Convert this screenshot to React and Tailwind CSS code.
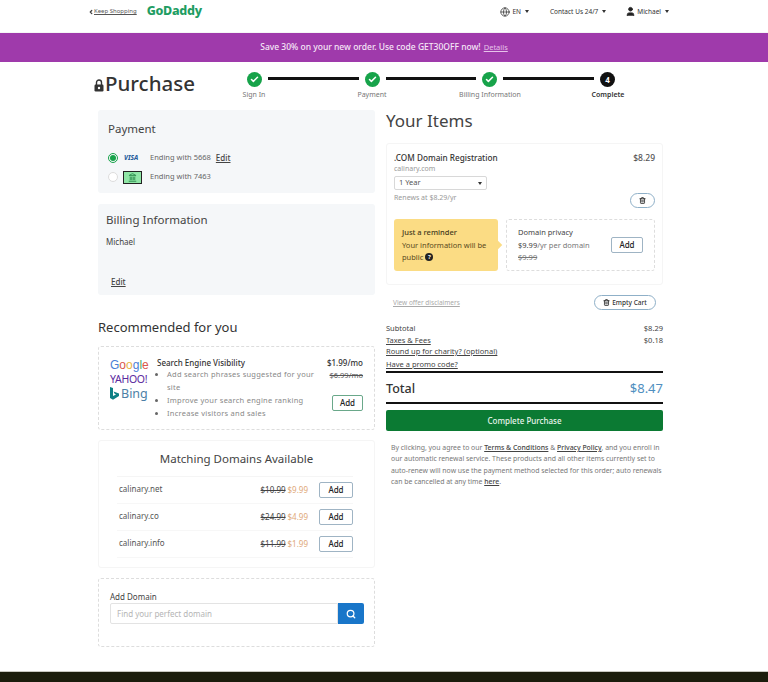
import { Globe, User, ChevronLeft, Search, Check, Trash2, Landmark } from 'lucide-react'

const Caret = () => (
  <span className="inline-block ml-[4px] w-0 h-0 border-x-[2.5px] border-x-transparent border-t-[3px] border-t-[#333] align-middle" />
)

const steps = [
  { label: 'Sign In' },
  { label: 'Payment' },
  { label: 'Billing Information' },
  { label: 'Complete', active: true }
]

const domains = [
  { name: 'calinary.net', old: '$10.99', price: '$9.99' },
  { name: 'calinary.co', old: '$24.99', price: '$4.99' },
  { name: 'calinary.info', old: '$11.99', price: '$1.99' }
]

const AddButton = ({ className = '' }) => (
  <button className={`bg-white border rounded-[2px] text-[8px] font-medium text-[#222] ${className}`}>
    Add
  </button>
)

const StepDot = ({ active, n }) =>
  active ? (
    <span className="w-[15px] h-[15px] rounded-full bg-[#111] text-white text-[8px] font-bold flex items-center justify-center shrink-0">
      {n}
    </span>
  ) : (
    <span className="w-[15px] h-[15px] rounded-full bg-[#17a34a] text-white flex items-center justify-center shrink-0">
      <Check size={9} strokeWidth={4} />
    </span>
  )

const TextLink = ({ children }) => (
  <span className="font-medium underline text-[#444]">{children}</span>
)

const App = () => {
  return (
    <div className="w-[768px] h-[682px] overflow-hidden bg-white flex flex-col text-[#333] font-['Noto_Sans',sans-serif]">
      {/* Header */}
      <div className="h-[33px] flex items-start pt-[5px] pl-[88px] pr-[99px] border-b border-[#f6f6f6] shrink-0">
        <div className="h-[13px] w-full flex items-center">
          <ChevronLeft size={6} strokeWidth={5} className="text-[#444]" />
          <span className="text-[6px] underline text-[#555]">Keep Shopping</span>
          <span className="ml-[10px] text-[12.5px] font-extrabold text-[#1f9d63] tracking-[-0.3px] leading-none">GoDaddy</span>
          <div className="ml-auto flex items-center text-[6.5px] text-[#333]">
            <Globe size={10} className="mr-[2px] text-[#444]" />
            <span>EN</span>
            <Caret />
            <span className="ml-[21px]">Contact Us 24/7</span>
            <Caret />
            <User size={11} fill="#222" className="ml-[19px] mr-[1px] text-[#222]" />
            <span>Michael</span>
            <Caret />
          </div>
        </div>
      </div>

      {/* Promo */}
      <div className="h-[29px] bg-[#9f3aab] flex items-center justify-center text-[8.5px] text-[#f6e7f7] shrink-0">
        <span className="font-medium">Save 30% on your new order. Use code GET30OFF now!</span>
        <span className="ml-[3px] text-[7.5px] underline text-[#e6c3ea]">Details</span>
      </div>

      {/* Title + stepper */}
      <div className="h-[48px] flex pl-[94px] shrink-0">
        <div className="w-[101px] flex items-center pb-[5px]">
          <svg width="10" height="13" viewBox="0 0 10 13" className="mr-[1px] mt-[3px] shrink-0">
            <path d="M2.5 6V3.5a2.5 2.5 0 0 1 5 0V6" fill="none" stroke="#333" strokeWidth="1.4" />
            <rect x="0.5" y="5.5" width="9" height="7" rx="1.2" fill="#333" />
            <circle cx="5" cy="9" r="1.2" fill="#fff" />
          </svg>
          <span className="text-[20.5px] font-medium text-[#333] leading-none">Purchase</span>
        </div>
        <div className="w-[472px] pt-[10px]">
          <div className="flex items-center px-[52px]">
            {steps.map((s, i) => (
              <div key={s.label} className={`flex items-center ${i < 3 ? 'flex-1' : ''}`}>
                <StepDot active={s.active} n={i + 1} />
                {i < 3 && <span className="flex-1 h-[3px] bg-[#111] mx-[6px] -mt-[3px]" />}
              </div>
            ))}
          </div>
          <div className="grid grid-cols-4 mt-[3px]">
            {steps.map((s) => (
              <span
                key={s.label}
                className={`text-center text-[7px] ${s.active ? 'font-semibold text-[#333]' : 'text-[#777]'}`}
              >
                {s.label}
              </span>
            ))}
          </div>
        </div>
      </div>

      {/* Columns */}
      <div className="flex gap-[11px] pl-[98px] flex-1 min-h-0">
        {/* Left */}
        <div className="w-[277px] shrink-0 flex flex-col">
          <div className="h-[83px] bg-[#f5f7f9] rounded-[3px] pl-[10px] pt-[11px]">
            <h2 className="text-[11.5px] text-[#444] leading-[16px]">Payment</h2>
            <div className="flex items-center mt-[15px] h-[12px]">
              <span className="w-[10px] h-[10px] rounded-full border border-[#17a34a] flex items-center justify-center">
                <span className="w-[6px] h-[6px] rounded-full bg-[#17a34a]" />
              </span>
              <span className="ml-[6px] w-[26px] text-[6.5px] font-extrabold italic text-[#2a5f9e]">VISA</span>
              <span className="text-[7.5px] text-[#666]">Ending with 5668</span>
              <span className="ml-[5px] text-[8px] font-medium underline text-[#444]">Edit</span>
            </div>
            <div className="flex items-center mt-[7px] h-[12px]">
              <span className="w-[10px] h-[10px] rounded-full border border-[#ddd] bg-white" />
              <span className="ml-[5px] w-[19px] h-[13px] border border-[#222] bg-[#8fe6a6] flex items-center justify-center">
                <Landmark size={9} className="text-[#157a3a]" />
              </span>
              <span className="ml-[8px] text-[7.5px] text-[#666]">Ending with 7463</span>
            </div>
          </div>

          <div className="h-[91px] mt-[11px] bg-[#f5f7f9] rounded-[3px] pl-[8px] pt-[8px]">
            <h2 className="text-[11.5px] text-[#444] leading-[16px]">Billing Information</h2>
            <p className="text-[8px] text-[#444] mt-[8px]">Michael</p>
            <p className="text-[8px] font-medium underline text-[#444] ml-[5px] mt-[28px]">Edit</p>
          </div>

          <h2 className="text-[13px] text-[#333] mt-[22px] leading-[20px]">Recommended for you</h2>

          <div className="h-[84px] mt-[9px] border border-dashed border-[#ddd] rounded-[3px] flex pl-[11px] pt-[11px] pr-[11px]">
            <div className="w-[40px] shrink-0 flex flex-col items-start">
              <span className="text-[12px] leading-[14px] font-['Liberation_Sans',sans-serif]">
                <span className="text-[#4a80d6]">G</span>
                <span className="text-[#d9584c]">o</span>
                <span className="text-[#e8b63e]">o</span>
                <span className="text-[#4a80d6]">g</span>
                <span className="text-[#4aa564]">l</span>
                <span className="text-[#d9584c]">e</span>
              </span>
              <span className="text-[10.5px] leading-[14px] text-[#5b2a9e] tracking-[-0.3px]">YAHOO!</span>
              <span className="flex items-center text-[12.5px] leading-[15px] text-[#4c7fa6]">
                <svg width="9" height="13" viewBox="0 0 9 13" className="mr-[2px]">
                  <path d="M0 0l3 1v8l3-1.6-1.6-.8L3.6 4.5 9 6.5v2.6L3 12.8 0 11z" fill="#0d7f84" />
                </svg>
                Bing
              </span>
            </div>
            <div className="ml-[7px] flex-1 min-w-0">
              <p className="text-[8px] font-medium text-[#333] leading-[10px]">Search Engine Visibility</p>
              <ul className="text-[7.5px] text-[#888] leading-[13px] tracking-[0.25px] list-disc pl-[10px] marker:text-[#666]">
                <li>Add search phrases suggested for your site</li>
                <li>Improve your search engine ranking</li>
                <li>Increase visitors and sales</li>
              </ul>
            </div>
            <div className="w-[46px] shrink-0 flex flex-col items-end">
              <span className="text-[8px] font-medium text-[#333] leading-[10px]">$1.99/mo</span>
              <span className="text-[7.5px] text-[#555] line-through mt-[2px] leading-[10px]">$6.99/mo</span>
              <AddButton className="w-[31px] h-[16px] mt-[15px] border-[#6aa88a]" />
            </div>
          </div>

          <div className="h-[128px] mt-[10px] border border-[#f5f5f5] rounded-[3px] pt-[10px] pl-[18px] pr-[21px]">
            <h3 className="text-center text-[11.5px] text-[#444] leading-[16px] ml-[3px]">Matching Domains Available</h3>
            <div className="mt-[9px] border-t border-[#f5f5f5]">
              {domains.map((d) => (
                <div key={d.name} className="h-[27px] flex items-center border-b border-[#f7f7f7] pl-[2px]">
                  <span className="text-[8px] text-[#555] -mt-[3px]">{d.name}</span>
                  <span className="ml-auto text-[8px] text-[#444] line-through">{d.old}</span>
                  <span className="ml-[2px] text-[8px] text-[#e0a878]">{d.price}</span>
                  <AddButton className="ml-[11px] w-[34px] h-[16px] border-[#9fb4c4]" />
                </div>
              ))}
            </div>
          </div>

          <div className="h-[69px] mt-[10px] border border-dashed border-[#ddd] rounded-[3px] pl-[11px] pr-[10px] pt-[12px]">
            <p className="text-[8px] text-[#444] leading-[12px]">Add Domain</p>
            <div className="flex h-[21px]">
              <div className="flex-1 border border-[#e3e3e3] rounded-l-[2px] flex items-center pl-[6px] text-[8px] text-[#b5b5b5]">
                Find your perfect domain
              </div>
              <div className="w-[26px] bg-[#1976c9] rounded-r-[2px] flex items-center justify-center">
                <Search size={10} strokeWidth={3} className="text-white" />
              </div>
            </div>
          </div>
        </div>

        {/* Right */}
        <div className="w-[277px] shrink-0 flex flex-col">
          <h2 className="text-[17px] text-[#444] leading-[22px]">Your Items</h2>

          <div className="h-[142px] mt-[11px] border border-[#f5f5f5] rounded-[3px] px-[7px] pt-[8px]">
            <div className="flex justify-between items-start">
              <span className="text-[8.2px] font-medium text-[#333] leading-[12px]">.COM Domain Registration</span>
              <span className="text-[8.5px] font-medium text-[#555] leading-[12px]">$8.29</span>
            </div>
            <p className="text-[7px] text-[#999] leading-[10px]">calinary.com</p>
            <div className="w-[93px] h-[14px] mt-[2px] border border-[#d8d8d8] rounded-[2px] flex items-center justify-between px-[4px] text-[7.5px] text-[#555]">
              <span>1 Year</span>
              <Caret />
            </div>
            <div className="flex justify-between items-start mt-[3px] h-[15px]">
              <span className="text-[7px] text-[#999] leading-[10px]">Renews at $8.29/yr</span>
              <span className="w-[25px] h-[15px] rounded-full border border-[#8fb0c8] flex items-center justify-center">
                <Trash2 size={7} strokeWidth={3} className="text-[#333]" />
              </span>
            </div>
            <div className="flex mt-[11px] gap-[8px]">
              <div className="relative w-[104px] h-[52px] bg-[#fbdc84] rounded-[3px] pl-[8px] pt-[7px] text-[7.5px] leading-[12.5px] text-[#5a4a20]">
                <p className="font-medium text-[#443a1c]">Just a reminder</p>
                <p>Your information will be</p>
                <p className="flex items-center">
                  public
                  <span className="ml-[2px] w-[8px] h-[8px] rounded-full bg-[#222] text-white text-[6px] font-bold flex items-center justify-center">?</span>
                </p>
                <span className="absolute -right-[3px] top-[23px] w-[6px] h-[6px] rotate-45 bg-[#fbdc84]" />
              </div>
              <div className="w-[149px] h-[52px] border border-dashed border-[#ddd] rounded-[3px] flex items-center pl-[11px] pr-[11px]">
                <div className="text-[7.5px] leading-[12.5px] text-[#777]">
                  <p className="text-[#444]">Domain privacy</p>
                  <p><span className="text-[#444]">$9.99</span>/yr per domain</p>
                  <p className="line-through">$9.99</p>
                </div>
                <AddButton className="ml-auto w-[32px] h-[16px] border-[#9fb4c4]" />
              </div>
            </div>
          </div>

          <div className="flex items-center justify-between mt-[10px] pl-[7px] pr-[7px]">
            <span className="text-[6.5px] text-[#aaa] underline">View offer disclaimers</span>
            <span className="w-[62px] h-[15px] rounded-full border border-[#8fb0c8] flex items-center justify-center text-[6.5px] font-medium text-[#333]">
              <Trash2 size={7} strokeWidth={3} className="mr-[2px]" />
              Empty Cart
            </span>
          </div>

          <div className="mt-[13px] text-[7.5px] text-[#444] leading-[11.5px]">
            <div className="flex justify-between"><span>Subtotal</span><span>$8.29</span></div>
            <div className="flex justify-between"><span className="underline">Taxes &amp; Fees</span><span>$0.18</span></div>
            <p className="underline">Round up for charity? (optional)</p>
            <p className="underline mt-[1px]">Have a promo code?</p>
          </div>

          <div className="mt-[1px] border-y-2 border-[#111] h-[33px] pt-[3px] flex items-center justify-between">
            <span className="text-[12.5px] font-medium text-[#333]">Total</span>
            <span className="text-[13px] text-[#4f8fc0]">$8.47</span>
          </div>

          <button className="h-[21px] mt-[6px] bg-[#0b7a33] rounded-[2px] text-[8px] font-medium text-[#e8f5ec]">
            Complete Purchase
          </button>

          <div className="mt-[11px] px-[5px] text-[6.9px] leading-[11.3px] text-[#777] whitespace-nowrap">
            <p>By clicking, you agree to our <TextLink>Terms &amp; Conditions</TextLink> &amp; <TextLink>Privacy Policy</TextLink>, and you enroll in</p>
            <p>our automatic renewal service. These products and all other items currently set to</p>
            <p>auto-renew will now use the payment method selected for this order; auto renewals</p>
            <p>can be cancelled at any time <TextLink>here</TextLink>.</p>
          </div>
        </div>
      </div>

      {/* Footer */}
      <div className="h-[11px] bg-[#1b1d0c] border-t border-[#c8c8c0] shrink-0" />
    </div>
  )
}

export default App
